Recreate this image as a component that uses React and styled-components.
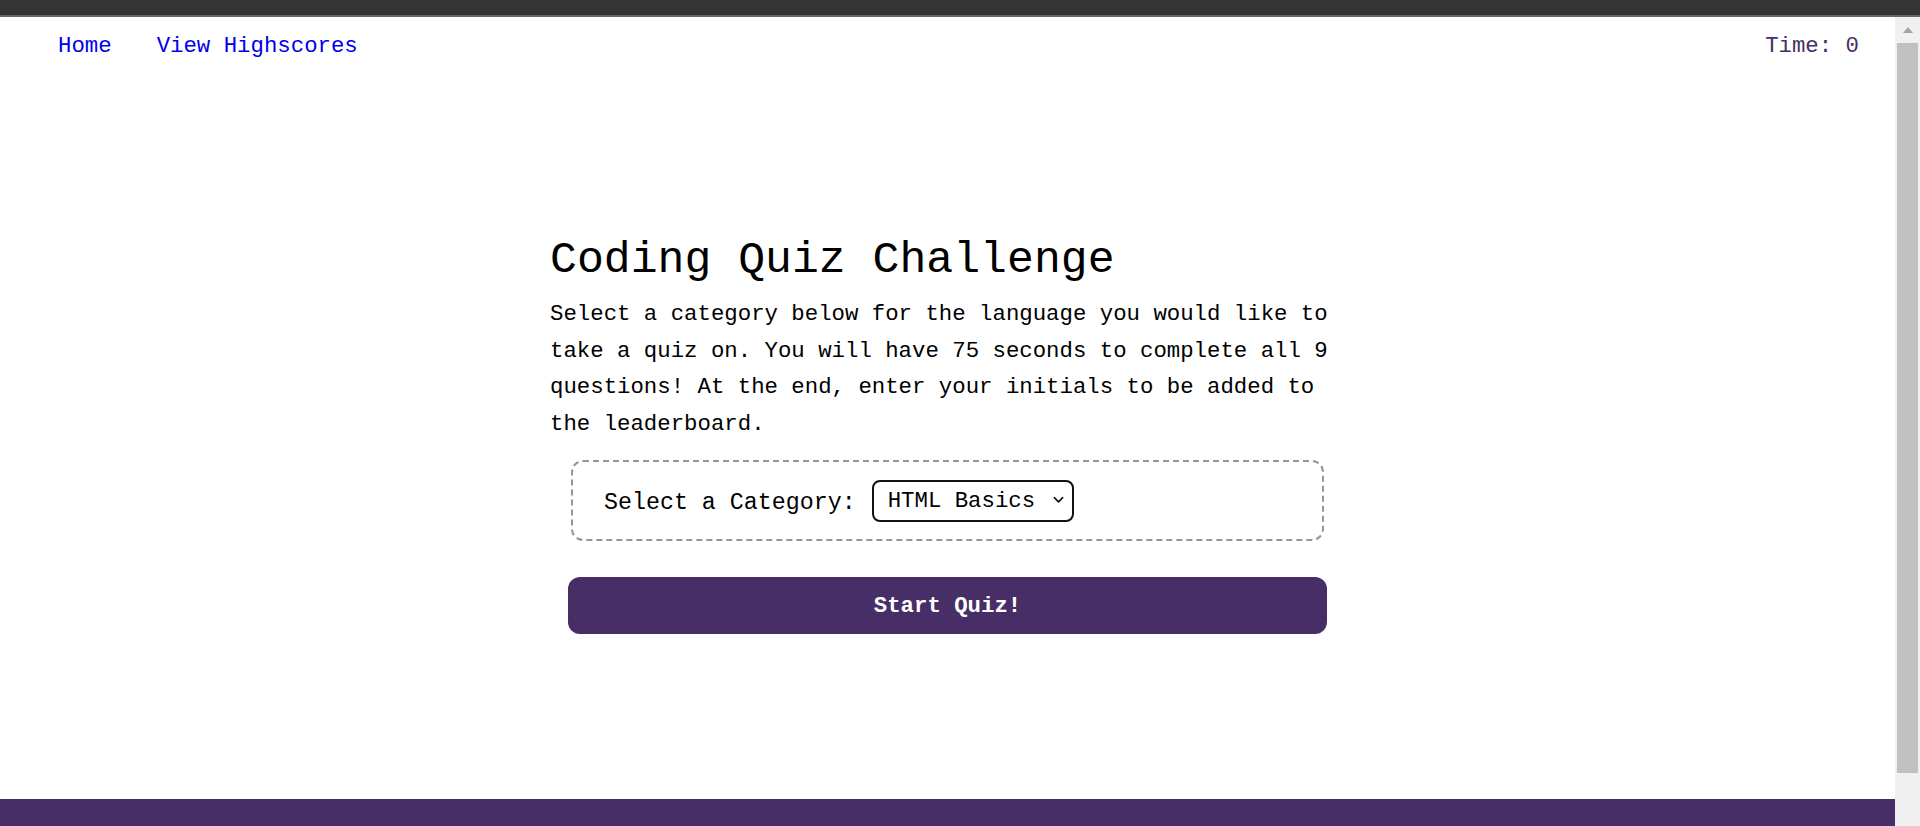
import React, { useState } from "react";
import styled, { createGlobalStyle } from "styled-components";

// 퀴즈 시작 화면: 상단 내비게이션, 카테고리 선택, 시작 버튼
const GlobalStyle = createGlobalStyle`
  html, body {
    margin: 0;
    padding: 0;
    height: 100%;
    overflow: hidden;
  }
  body {
    font-family: "Liberation Mono", "DejaVu Sans Mono", monospace;
    background-color: #fff;
    color: #000;
  }
  #root {
    height: 100%;
  }
`;

const categories = ["HTML Basics", "CSS Basics", "JavaScript Basics"];

function App() {
  const [category, setCategory] = useState(categories[0]);
  const [time] = useState(0);

  return (
    <StFrame>
      <GlobalStyle />
      <StTopBar />
      <StBody>
        <StPage>
          <StHeader>
            <StNav>
              <StNavLink href="#">Home</StNavLink>
              <StNavLink href="#">View Highscores</StNavLink>
            </StNav>
            <StTimer>Time: {time}</StTimer>
          </StHeader>
          <StMain>
            <StCard>
              <StTitle>Coding Quiz Challenge</StTitle>
              <StIntro>
                Select a category below for the language you would like to
                take a quiz on. You will have 75 seconds to complete all 9
                questions! At the end, enter your initials to be added to the
                leaderboard.
              </StIntro>
              <StCategoryBox>
                <StLabel htmlFor="category">Select a Category:</StLabel>
                <StSelectWrap>
                  <StSelect
                    id="category"
                    value={category}
                    onChange={(e) => setCategory(e.target.value)}
                  >
                    {categories.map((c) => (
                      <option key={c}>{c}</option>
                    ))}
                  </StSelect>
                  <StChevron viewBox="0 0 12 8" aria-hidden="true">
                    <path d="M1.5 1.5 6 6l4.5-4.5" />
                  </StChevron>
                </StSelectWrap>
              </StCategoryBox>
              <StStartBtn>Start Quiz!</StStartBtn>
            </StCard>
          </StMain>
          <StFooter />
        </StPage>
        <StScrollbar>
          <StScrollArrow>
            <StArrowUp />
          </StScrollArrow>
          <StThumb />
        </StScrollbar>
      </StBody>
    </StFrame>
  );
}

export default App;

const purple = "#472e66";

const StFrame = styled.div`
  height: 100vh;
  display: flex;
  flex-direction: column;
`;

const StTopBar = styled.div`
  height: 15px;
  flex-shrink: 0;
  background-color: #343434;
  border-bottom: 2px solid #676767;
`;

const StBody = styled.div`
  flex: 1;
  min-height: 0;
  display: flex;
`;

const StPage = styled.div`
  flex: 1;
  display: flex;
  flex-direction: column;
`;

const StHeader = styled.header`
  display: flex;
  justify-content: space-between;
  padding: 11px 36px 0 58px;
  font-size: 22.35px;
  line-height: 36px;
`;

const StNav = styled.nav`
  display: flex;
  gap: 45px;
`;

const StNavLink = styled.a`
  color: #0000ee;
  text-decoration: none;
`;

const StTimer = styled.span`
  color: ${purple};
`;

const StMain = styled.main`
  flex: 1;
  display: flex;
  justify-content: center;
`;

const StCard = styled.section`
  width: 795px;
  padding-top: 170px;
  display: flex;
  flex-direction: column;
`;

const StTitle = styled.h1`
  margin: 0;
  font-size: 44.8px;
  font-weight: normal;
  line-height: 52px;
`;

const StIntro = styled.p`
  margin: 10px 0 0;
  font-size: 22.35px;
  line-height: 36.6px;
`;

const StCategoryBox = styled.div`
  margin: 18px 21px 0;
  height: 81px;
  box-sizing: border-box;
  border: 2px dashed #969696;
  border-radius: 12px;
  display: flex;
  align-items: center;
  gap: 16px;
  padding-left: 31px;
`;

const StLabel = styled.label`
  flex-shrink: 0;
  font-size: 23.3px;
  padding-top: 4px;
`;

const StSelectWrap = styled.div`
  position: relative;
  flex-shrink: 0;
  display: flex;
`;

const StSelect = styled.select`
  appearance: none;
  width: 202px;
  height: 42px;
  box-sizing: border-box;
  border: 2px solid #111;
  border-radius: 8px;
  padding: 0 0 0 14px;
  background-color: #fff;
  color: #000;
  font-family: inherit;
  font-size: 22.35px;
`;

const StChevron = styled.svg`
  position: absolute;
  right: 10px;
  top: 16px;
  width: 11px;
  height: 8px;
  fill: none;
  stroke: #111;
  stroke-width: 1.8;
  stroke-linecap: round;
  stroke-linejoin: round;
  pointer-events: none;
`;

const StStartBtn = styled.button`
  margin: 36px 18px 0;
  height: 57px;
  border: none;
  border-radius: 12px;
  background-color: ${purple};
  color: #fff;
  font-family: inherit;
  font-size: 22.35px;
  font-weight: bold;
  cursor: pointer;
`;

const StFooter = styled.footer`
  height: 27px;
  flex-shrink: 0;
  background-color: ${purple};
`;

const StScrollbar = styled.div`
  width: 25px;
  flex-shrink: 0;
  background-color: #f0f0f0;
  display: flex;
  flex-direction: column;
  align-items: center;
`;

const StScrollArrow = styled.div`
  height: 26px;
  display: flex;
  align-items: center;
  justify-content: center;
`;

const StArrowUp = styled.div`
  width: 0;
  height: 0;
  border-left: 5px solid transparent;
  border-right: 5px solid transparent;
  border-bottom: 6px solid #a3a3a3;
`;

const StThumb = styled.div`
  width: 21px;
  height: 730px;
  background-color: #c1c1c1;
`;
